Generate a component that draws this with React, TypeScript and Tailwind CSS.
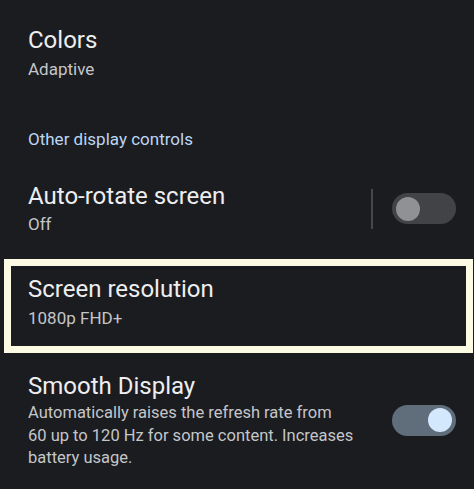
import React from "react";

const font = { fontFamily: "Roboto, 'Noto Sans', sans-serif" };

function Toggle({ on }: { on: boolean }) {
  return (
    <div
      className={`w-[64px] h-[31px] rounded-full flex items-center px-[4px] ${
        on ? "bg-[#5f6e7a] justify-end" : "bg-[#424346] justify-start"
      }`}
    >
      <div
        className={`w-[24px] h-[24px] rounded-full ${
          on ? "bg-[#d3e8fd]" : "bg-[#909194]"
        }`}
      />
    </div>
  );
}

export default function App() {
  return (
    <div
      className="w-[474px] h-[489px] bg-[#1b1c1f] overflow-hidden text-[#e3e3e6]"
      style={font}
    >
      <div className="px-[28px] pt-[25px]">
        <div className="text-[24px] leading-[30px] text-[#eeeef0]">Colors</div>
        <div className="text-[17px] leading-[24px] mt-[2px] text-[#c4c6ca]">Adaptive</div>
      </div>
      <div className="px-[28px] mt-[46px] text-[17px] leading-[24px] text-[#bcd6f4]">
        Other display controls
      </div>
      <div className="flex items-center pl-[28px] pr-[18px] mt-[30px]">
        <div className="flex-1">
          <div className="text-[24px] leading-[30px] text-[#eeeef0]">Auto-rotate screen</div>
          <div className="text-[17px] leading-[24px] mt-[1px] text-[#c4c6ca]">Off</div>
        </div>
        <div className="w-[2px] h-[40px] bg-[#46474a] mr-[19px]" />
        <Toggle on={false} />
      </div>
      <div className="ml-[4px] mr-[1px] mt-[23px] border-[7px] border-[#fdfbe4] h-[94px] px-[17px] pt-[8px]">
        <div className="text-[24px] leading-[30px] text-[#eeeef0]">Screen resolution</div>
        <div className="text-[17px] leading-[24px] mt-[2px] text-[#c4c6ca]">1080p FHD+</div>
      </div>
      <div className="flex items-center pl-[28px] pr-[18px] mt-[18px]">
        <div className="flex-1">
          <div className="text-[24px] leading-[30px] text-[#eeeef0]">Smooth Display</div>
          <div className="text-[16.5px] leading-[22.5px] mt-[1px] text-[#c4c6ca] whitespace-nowrap">
            Automatically raises the refresh rate from
            <br />
            60 up to 120 Hz for some content. Increases
            <br />
            battery usage.
          </div>
        </div>
        <div className="ml-[12px] shrink-0">
          <Toggle on={true} />
        </div>
      </div>
    </div>
  );
}
